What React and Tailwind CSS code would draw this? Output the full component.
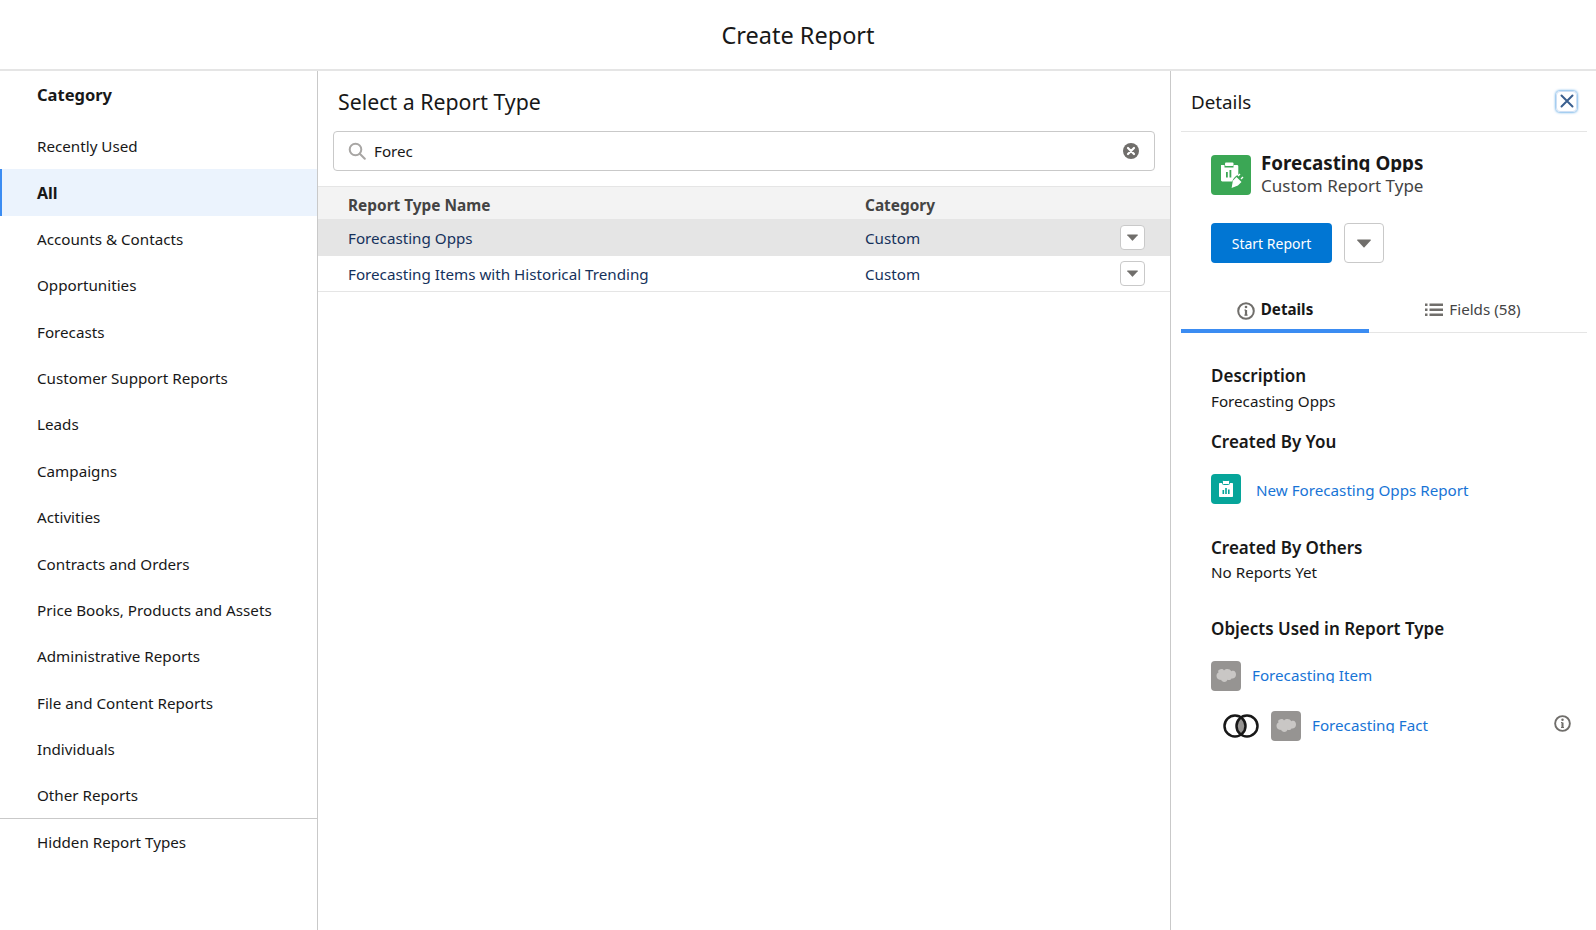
const cats = ["Recently Used","All","Accounts & Contacts","Opportunities","Forecasts","Customer Support Reports","Leads","Campaigns","Activities","Contracts and Orders","Price Books, Products and Assets","Administrative Reports","File and Content Reports","Individuals","Other Reports"];

function Caret({ className = "" }) {
  return (
    <svg viewBox="0 0 14 9" className={className} fill="#706e6b"><path d="M0.8 0.6h12.4c.5 0 .8.6.5 1L7.5 8.300c-.3.3-.7.3-1 0L.3 1.600c-.3-.4 0-1 .5-1z" /></svg>
  );
}

function RowMenu() {
  return (
    <button className="w-[25px] h-[25px] bg-white border border-[#c9c9c9] rounded-[4px] flex items-center justify-center">
      <Caret className="w-[11px] h-[7px]" />
    </button>
  );
}

function Cloud({ className = "" }) {
  return (
    <div className={`w-[30px] h-[30px] rounded-[4px] bg-[#969492] flex items-center justify-center shrink-0 ${className}`}>
      <svg viewBox="0 0 20 14" className="w-[20px] h-[14px]" fill="#c9c7c5"><path d="M8 1.400C9 .5 10.200 0 11.500 0c1.600 0 3 .9 3.700 2.200.6-.3 1.300-.4 2-.4C19 1.800 20 3.500 20 5.700S18.300 9.600 16.300 9.600c-.3 0-.5 0-.8-.1-.5 1-1.500 1.600-2.700 1.600-.5 0-1-.1-1.400-.3C10.900 12.200 9.700 13 8.300 13c-1.500 0-2.700-.9-3.200-2.200-.2 0-.4.100-.7.100C2.200 10.900.5 9.200.5 7c0-1.500.8-2.800 2-3.400-.2-.5-.3-1-.3-1.500C2.200 1 4 0 5.500 0 6.500 0 7.400.5 8 1.400z"/></svg>
    </div>
  );
}

function Info({ className = "" }) {
  return (
    <svg viewBox="0 0 18 18" className={className} fill="none" stroke="#706e6b" strokeWidth="2"><circle cx="9" cy="9" r="7.800" /><path d="M9 8v5.200" strokeWidth="2.200" /><path d="M7.400 8h1.600M7.400 13.200h3.200" strokeWidth="1.200" /><circle cx="9" cy="5" r="1.300" fill="#706e6b" stroke="none" /></svg>
  );
}

export default function App() {
  return (
    <div className="w-[1596px] h-[930px] overflow-hidden bg-white flex flex-col text-[15.2px] text-[#181818] font-['Noto_Sans',sans-serif]">
      <header className="h-[71px] shrink-0 flex items-center justify-center border-b-2 border-[#e5e5e5]">
        <h1 className="text-[23.5px] leading-[30px] text-[#181818]">Create Report</h1>
      </header>
      <div className="flex flex-1 min-h-0">
        <aside className="w-[318px] shrink-0 border-r border-[#c9c9c9] flex flex-col">
          <h2 className="text-[16.5px] leading-[24px] font-bold pl-[37px] pt-[12px] h-[52px]">Category</h2>
          <ul>
            {cats.map((c) => (
              <li key={c} className={`h-[46.36px] flex items-center pt-[1px] ${c === "All" ? "bg-[#ebf3fd] border-l-[2px] border-[#3b8cf2] pl-[35px] font-bold text-[16px]" : "pl-[37px]"}`}>{c}</li>
            ))}
          </ul>
          <div className="border-t border-[#c9c9c9] h-[48px] flex items-center pl-[37px]">Hidden Report Types</div>
        </aside>
        <main className="w-[853px] shrink-0 border-r border-[#c9c9c9] flex flex-col">
          <h2 className="text-[21.3px] leading-[30px] pl-[20px] pt-[16px] h-[60px]">Select a Report Type</h2>
          <div className="mx-[15px] h-[40px] border border-[#c9c9c9] rounded-[4px] flex items-center pl-[14px] pr-[15px]">
            <svg viewBox="0 0 18 18" className="w-[18px] h-[18px] shrink-0" fill="none" stroke="#a8a6a4" strokeWidth="2"><circle cx="7.500" cy="7.500" r="5.800" /><path d="M11.800 11.800l5 5" strokeLinecap="round" /></svg>
            <span className="ml-[8px] flex-1">Forec</span>
            <svg viewBox="0 0 16 16" className="w-[16px] h-[16px]"><circle cx="8" cy="8" r="8" fill="#706e6b" /><path d="M5 5l6 6M11 5l-6 6" stroke="#fff" strokeWidth="2.200" strokeLinecap="round" /></svg>
          </div>
          <div className="mt-[15px] border-t border-[#e5e5e5] bg-[#f3f3f3] h-[33px] flex items-center font-bold text-[#444444] pt-[5px] text-[15.400px]">
            <span className="w-[547px] pl-[30px]">Report Type Name</span>
            <span>Category</span>
          </div>
          <div className="h-[37px] bg-[#e5e5e5] flex items-center text-[#16325c]">
            <span className="w-[547px] pl-[30px] pt-[2px]">Forecasting Opps</span>
            <span className="flex-1 pt-[2px]">Custom</span>
            <div className="mr-[25px]"><RowMenu /></div>
          </div>
          <div className="h-[36px] border-b border-[#e5e5e5] flex items-center text-[#16325c]">
            <span className="w-[547px] pl-[30px] pt-[2px]">Forecasting Items with Historical Trending</span>
            <span className="flex-1 pt-[2px]">Custom</span>
            <div className="mr-[25px]"><RowMenu /></div>
          </div>
        </main>
        <section className="flex-1 flex flex-col pl-[10px] pr-[9px]">
          <div className="h-[61px] shrink-0 border-b border-[#e5e5e5] flex items-center justify-between pl-[10px] pr-[10px]">
            <span className="text-[18.800px] pt-[3px]">Details</span>
            <button className="w-[21px] h-[21px] rounded-[4px] border border-[#cfe0f5] shadow-[0_0_3px_#0176d3] flex items-center justify-center">
              <svg viewBox="0 0 14 14" className="w-[14px] h-[14px]" fill="none" stroke="#3a5f8f" strokeWidth="2" strokeLinecap="round"><path d="M1.500 1.500l11 11M12.500 1.500l-11 11" /></svg>
            </button>
          </div>
          <div className="pl-[30px] pt-[23px] flex gap-[10px]">
            <div className="w-[40px] h-[40px] rounded-[4px] bg-[#3ba755] flex items-center justify-center">
              <svg viewBox="0 0 28 28" className="w-[28px] h-[28px]" fill="#fff"><path d="M4 4h3.500v2.500h9V4H20c.8 0 1.300.6 1.300 1.300V14c-2 0-5 3-6 6.500H5.300C4.600 20.500 4 20 4 19.300z" /><rect x="8" y="1.500" width="8.500" height="3.500" rx="1" /><rect x="9" y="11" width="1.800" height="5.500" fill="#3ba755" /><rect x="12.500" y="9" width="1.800" height="7.500" fill="#3ba755" /><path d="M15.500 26l1-6 3-3 4 4-3 3zM21 15l2-2M24 18l2-2" stroke="#fff" strokeWidth="1.400" /></svg>
            </div>
            <div className="-mt-[3px]">
              <div className="h-[20px] overflow-hidden text-[18.800px] font-bold leading-[22px]">Forecasting Opps</div>
              <div className="text-[17px] leading-[24px] text-[#444444] mt-[2px]">Custom Report Type</div>
            </div>
          </div>
          <div className="pl-[30px] mt-[25px] flex gap-[12px]">
            <button className="w-[121px] h-[40px] rounded-[4px] bg-[#0176d3] text-white text-[14px]">Start Report</button>
            <button className="w-[40px] h-[40px] rounded-[4px] border border-[#c9c9c9] flex items-center justify-center"><Caret className="w-[14px] h-[9px]" /></button>
          </div>
          <div className="mt-[35px] h-[35px] flex border-b border-[#e5e5e5]">
            <div className="w-[188px] h-[35px] border-b-[4px] border-[#3b8cf2] flex items-center justify-center gap-[6px] font-bold pb-[8px]">
              <Info className="w-[18px] h-[18px] mt-[2px]" />
              Details
            </div>
            <div className="flex-1 flex items-center justify-center gap-[6px] text-[#444444] pb-[12px] pr-[10px]">
              <svg viewBox="0 0 18 14" className="w-[18px] h-[14px] mt-[2px]" fill="#706e6b"><rect x="0" y="0.500" width="2.500" height="2.500" /><rect x="4.500" y="0.500" width="13.500" height="2.500" /><rect x="0" y="5.500" width="2.500" height="2.500" /><rect x="4.500" y="5.500" width="13.500" height="2.500" /><rect x="0" y="10.500" width="2.500" height="2.500" /><rect x="4.500" y="10.500" width="13.500" height="2.500" /></svg>
              Fields (58)
            </div>
          </div>
          <div className="pl-[30px] pt-[30px]">
            <h3 className="text-[17px] leading-[26px] font-semibold">Description</h3>
            <p className="leading-[24px]">Forecasting Opps</p>
            <h3 className="text-[17px] leading-[26px] font-semibold mt-[16px]">Created By You</h3>
            <div className="flex items-center mt-[19px] gap-[15px]">
              <div className="w-[30px] h-[30px] rounded-[4px] bg-[#06a59a] flex items-center justify-center">
                <svg viewBox="0 0 20 20" className="w-[20px] h-[20px]"><path d="M4 4h12c.6 0 1 .4 1 1v12c0 .6-.4 1-1 1H4c-.6 0-1-.4-1-1V5c0-.6.4-1 1-1z" fill="#fff" /><rect x="6.500" y="1.500" width="7" height="4" rx="1" fill="#fff" stroke="#06a59a" strokeWidth="1" /><rect x="6.500" y="11" width="1.600" height="4" fill="#06a59a" /><rect x="9.200" y="9" width="1.600" height="6" fill="#06a59a" /><rect x="12" y="10.500" width="1.600" height="4.500" fill="#06a59a" /></svg>
              </div>
              <a className="text-[#1874d6] pt-[2px]">New Forecasting Opps Report</a>
            </div>
            <h3 className="text-[17px] leading-[26px] font-semibold mt-[31px]">Created By Others</h3>
            <p className="leading-[24px] -mt-[1px]">No Reports Yet</p>
            <h3 className="text-[17px] leading-[26px] font-semibold mt-[32px]">Objects Used in Report Type</h3>
            <div className="flex items-center mt-[19px] gap-[11px]">
              <Cloud />
              <a className="text-[#1874d6] h-[16px] overflow-hidden leading-[16px] -mt-[2px]">Forecasting Item</a>
            </div>
            <div className="flex items-center mt-[20px] pr-[16px]">
              <svg viewBox="0 0 36 26" className="w-[36px] h-[26px] ml-[12px] shrink-0"><path d="M18 4.500a11 11 0 0 1 0 17a11 11 0 0 1 0-17z" fill="#969492" /><circle cx="12" cy="13" r="10.500" fill="none" stroke="#181818" strokeWidth="2.500" /><circle cx="24" cy="13" r="10.500" fill="none" stroke="#181818" strokeWidth="2.500" /></svg>
              <Cloud className="ml-[12px]" />
              <a className="text-[#1874d6] ml-[11px] flex-1 h-[16px] overflow-hidden leading-[16px] -mt-[2px]">Forecasting Fact</a>
              <Info className="w-[17px] h-[17px] -mt-[6px]" />
            </div>
          </div>
        </section>
      </div>
    </div>
  );
}
